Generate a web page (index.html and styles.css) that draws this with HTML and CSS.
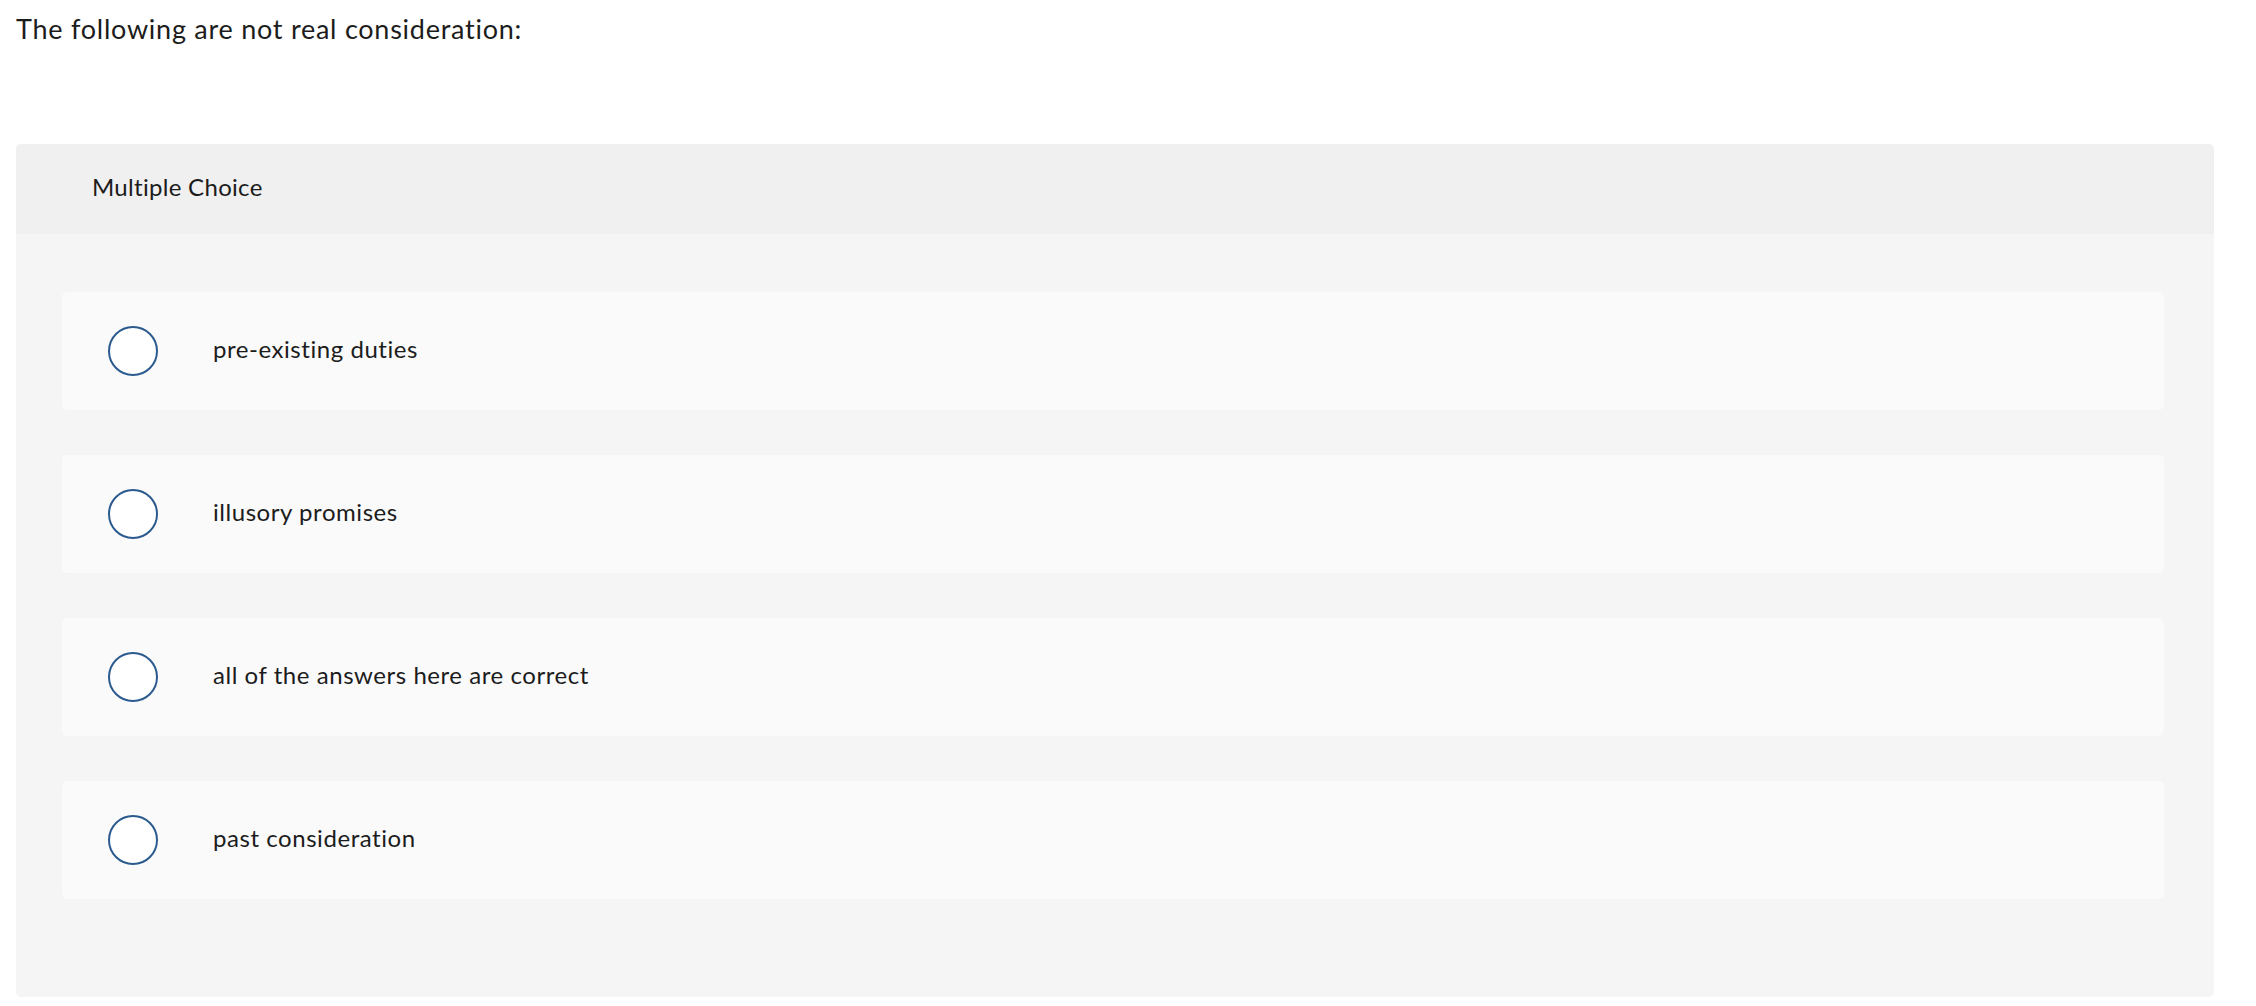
FILE: index.html
```html
<!DOCTYPE html>
<html lang="en">
<head>
<meta charset="utf-8">
<title>Multiple Choice</title>
<link rel="stylesheet" href="styles.css">
</head>
<body>
<main class="page">
  <p class="prompt">The following are not real consideration:</p>
  <section class="question">
    <header class="question-head">Multiple Choice</header>
    <div class="choices">
      <label class="choice"><span class="radio"></span><span class="choice-text">pre-existing duties</span></label>
      <label class="choice"><span class="radio"></span><span class="choice-text">illusory promises</span></label>
      <label class="choice"><span class="radio"></span><span class="choice-text">all of the answers here are correct</span></label>
      <label class="choice"><span class="radio"></span><span class="choice-text">past consideration</span></label>
    </div>
  </section>
</main>
</body>
</html>
```
FILE: styles.css
```css
html, body {
  margin: 0;
  padding: 0;
  background: #ffffff;
}
body {
  font-family: Lato, "Noto Sans", sans-serif;
  color: #1c1c1c;
}
.page {
  padding: 0 42px 9px 16px;
}
.prompt {
  margin: 0;
  padding-top: 11px;
  font-size: 27px;
  letter-spacing: 0.75px;
  line-height: 36px;
  height: 144px;
  box-sizing: border-box;
}
.question {
  background: #f5f5f5;
  border-radius: 5px;
  overflow: hidden;
}
.question-head {
  background: #f0f0f0;
  height: 90px;
  box-sizing: border-box;
  display: flex;
  align-items: center;
  padding: 0 0 6px 76px;
  font-size: 24px;
  letter-spacing: 0.3px;
}
.choices {
  display: flex;
  flex-direction: column;
  gap: 45px;
  padding: 58px 50px 98px 46px;
}
.choice {
  background: #fafafa;
  border-radius: 5px;
  height: 118px;
  display: flex;
  align-items: center;
  padding-left: 46px;
}
.radio {
  width: 50px;
  height: 50px;
  box-sizing: border-box;
  border: 2px solid #2b5a8e;
  border-radius: 50%;
  background: #ffffff;
  flex: none;
}
.choice-text {
  margin-left: 55px;
  padding-bottom: 6px;
  font-size: 24px;
  letter-spacing: 0.55px;
}
```
